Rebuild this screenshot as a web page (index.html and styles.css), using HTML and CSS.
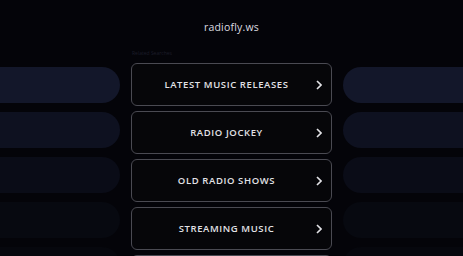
FILE: index.html
```html
<!DOCTYPE html>
<html lang="en">
<head>
<meta charset="UTF-8">
<meta name="viewport" content="width=device-width, initial-scale=1.0">
<title>radiofly.ws</title>
<link rel="stylesheet" href="styles.css">
</head>
<body>
<div class="header">radiofly.ws</div>

<div class="layout">
    <div class="side side-left">
        <div class="pill p1"></div>
        <div class="pill p2"></div>
        <div class="pill p3"></div>
        <div class="pill p4"></div>
        <div class="pill p5"></div>
    </div>

    <div class="links">
        <div class="label">Related Searches</div>
        <a class="link" href="#"><span>Latest Music Releases</span><svg class="chev" viewBox="0 0 6 10"><path d="M1 1l4 4-4 4" /></svg></a>
        <a class="link" href="#"><span>Radio Jockey</span><svg class="chev" viewBox="0 0 6 10"><path d="M1 1l4 4-4 4" /></svg></a>
        <a class="link" href="#"><span>Old Radio Shows</span><svg class="chev" viewBox="0 0 6 10"><path d="M1 1l4 4-4 4" /></svg></a>
        <a class="link" href="#"><span>Streaming Music</span><svg class="chev" viewBox="0 0 6 10"><path d="M1 1l4 4-4 4" /></svg></a>
        <a class="link" href="#"></a>
    </div>

    <div class="side side-right">
        <div class="pill p1"></div>
        <div class="pill p2"></div>
        <div class="pill p3"></div>
        <div class="pill p4"></div>
        <div class="pill p5"></div>
    </div>
</div>
</body>
</html>
```

FILE: styles.css
```css
body, html {
    margin: 0;
    padding: 0;
    height: 100%;
    overflow: hidden;
}

body {
    background-color: #040409;
    font-family: "Open Sans", sans-serif;
    color: #dcdce0;
}

.header {
    box-sizing: border-box;
    text-align: center;
    font-size: 10.5px;
    font-weight: 500;
    line-height: 16px;
    padding-top: 19px;
    height: 48px;
    letter-spacing: 0.2px;
}

.layout {
    display: grid;
    grid-template-columns: 1fr 201px 1fr;
    column-gap: 11px;
}

.side {
    display: flex;
    flex-direction: column;
    gap: 9px;
    padding-top: 19px;
}

.pill {
    height: 36px;
}

.side-left .pill {
    border-radius: 0 18px 18px 0;
}

.side-right .pill {
    border-radius: 18px 0 0 18px;
}

.p1 { background-color: #13172a; }
.p2 { background-color: #0e1120; }
.p3 { background-color: #0a0c17; }
.p4 { background-color: #070910; }
.p5 { background-color: #06070d; }

.links {
    display: flex;
    flex-direction: column;
    gap: 5px;
}

.label {
    font-size: 5px;
    color: #1c1d2a;
    height: 10px;
    line-height: 10px;
    padding-left: 1px;
}

.link {
    position: relative;
    box-sizing: border-box;
    display: flex;
    flex-shrink: 0;
    align-items: center;
    justify-content: center;
    height: 43px;
    border: 1.5px solid #4a4a52;
    border-radius: 6px;
    background-color: #060609;
    color: #e2e2e6;
    text-decoration: none;
    text-transform: uppercase;
    font-size: 9.5px;
    font-weight: 600;
    letter-spacing: 0.6px;
    padding-right: 10px;
}

.chev {
    position: absolute;
    right: 9px;
    top: 50%;
    width: 6px;
    height: 10px;
    margin-top: -5px;
    fill: none;
    stroke: #e2e2e6;
    stroke-width: 1.6;
}
```
